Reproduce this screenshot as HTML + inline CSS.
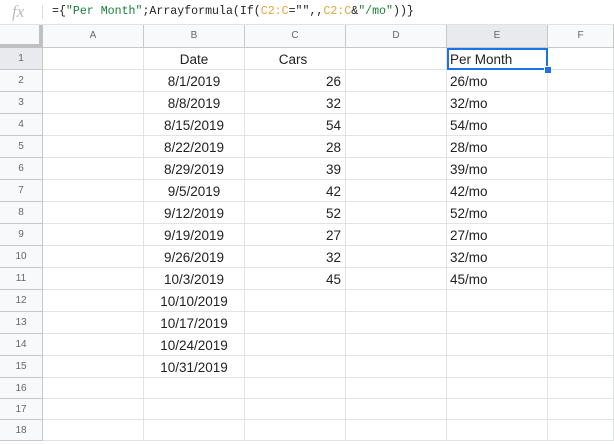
<!DOCTYPE html><html><head><style>
body{margin:0;width:614px;height:444px;overflow:hidden;background:#fff;font-family:"Liberation Sans",Arial,sans-serif;position:relative}
.fb{position:absolute;left:0;top:0;width:614px;height:24px;border-bottom:1px solid #e2e2e2;background:#fff}
.fx{position:absolute;left:12px;top:2px;font-family:"Liberation Serif",serif;font-style:italic;font-size:17px;color:#bbb}
.sep{position:absolute;left:42px;top:5px;width:1px;height:14px;background:#ddd}
.f{position:absolute;left:52px;top:5px;font-family:"Liberation Mono",monospace;font-size:11.6px;color:#222;white-space:pre}
.g{color:#188038}.o{color:#e8a33c}
.c{position:absolute;box-sizing:border-box;border-right:1px solid #e2e3e3;border-bottom:1px solid #e2e3e3;font-size:13.5px;color:#222;line-height:23px;white-space:nowrap;overflow:hidden}
.h{background:#f8f9fa;color:#666;font-size:10px;text-align:center;border-color:#c8c8c8}
.sel{background:#e8eaed}
</style></head><body>
<div class="fb"><span class="fx">fx</span><div class="sep"></div><div class="f">={<span class="g">"Per Month"</span>;Arrayformula(If(<span class="o">C2:C</span>="",,<span class="o">C2:C</span>&amp;<span class="g">"/mo"</span>))}</div></div>
<div id="g"></div>
<script>
var cols=[43,144,245,346,447,548,614],L="ABCDEF",h='';
var B=["Date","8/1/2019","8/8/2019","8/15/2019","8/22/2019","8/29/2019","9/5/2019","9/12/2019","9/19/2019","9/26/2019","10/3/2019","10/10/2019","10/17/2019","10/24/2019","10/31/2019"];
var C=["Cars",26,32,54,28,39,42,52,27,32,45];
var E=["Per Month","26/mo","32/mo","54/mo","28/mo","39/mo","42/mo","52/mo","27/mo","32/mo","45/mo"];
h+='<div class="c h" style="left:0;top:25px;width:43px;height:23px;border-right:4px solid #c0c0c0;border-bottom:4px solid #c0c0c0"></div>';
for(var i=0;i<6;i++)h+='<div class="c h'+(i==4?' sel':'')+'" style="left:'+cols[i]+'px;top:25px;width:'+(cols[i+1]-cols[i])+'px;height:23px;line-height:22px">'+L[i]+'</div>';
var y=48;
for(var r=1;r<=18;r++){var rh=r<=15?22:21;
h+='<div class="c h'+(r==1?' sel':'')+'" style="left:0;top:'+y+'px;width:43px;height:'+rh+'px;line-height:'+rh+'px">'+r+'</div>';
for(var i=0;i<6;i++){var t='',al='left',pd='';
if(i==1&&B[r-1]){t=B[r-1];al='center'}
if(i==2&&C[r-1]!==undefined){t=C[r-1];al=r==1?'center':'right';pd='padding-right:4px;'}
if(i==4&&E[r-1]){t=E[r-1];pd='padding-left:3px;'}
h+='<div class="c" style="left:'+cols[i]+'px;top:'+y+'px;width:'+(cols[i+1]-cols[i])+'px;height:'+rh+'px;text-align:'+al+';'+pd+'">'+t+'</div>';}
y+=rh;}
h+='<div style="position:absolute;left:447px;top:48px;width:101px;height:22px;box-sizing:border-box;border:2px solid #1a73e8"></div>';
h+='<div style="position:absolute;left:544px;top:66px;width:6px;height:6px;background:#1a73e8;border:1px solid #fff"></div>';
document.getElementById('g').innerHTML=h;
</script>
</body></html>
